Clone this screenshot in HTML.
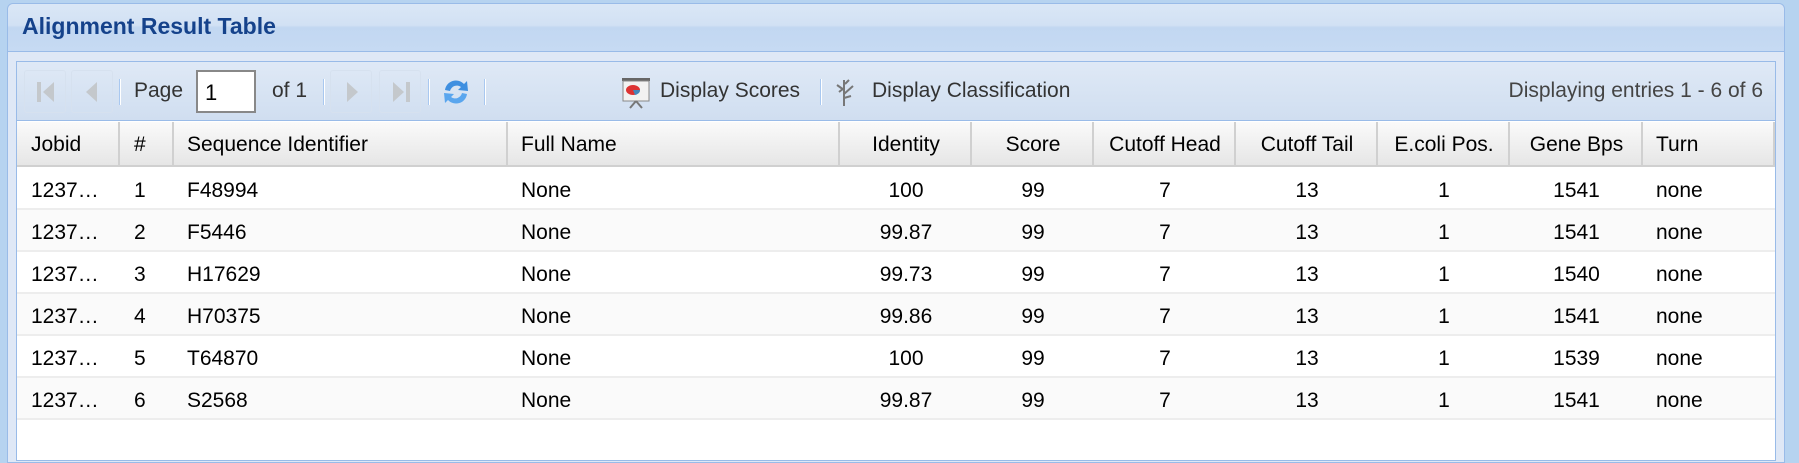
<!DOCTYPE html>
<html><head><meta charset="utf-8"><style>
*{margin:0;padding:0;box-sizing:border-box}
body{width:1799px;height:456px;overflow:hidden;background:#b6d3f0;font-family:"Liberation Sans",Tahoma,sans-serif;position:relative}
.outer{position:absolute;left:7px;top:3px;width:1778px;height:460px;border:1px solid #99bbe8;border-radius:6px 6px 0 0;background:#dfe8f6}
.title{position:absolute;left:0;top:0;right:0;height:48px;background:linear-gradient(#dae7f6 0,#d2e1f4 45%,#c2d7f1 50%,#c6daf3 100%);border-bottom:1px solid #99bbe8;border-radius:6px 6px 0 0}
.title span{position:absolute;left:14px;top:9px;font-weight:bold;font-size:23px;color:#15428b}
.inner{position:absolute;left:16px;top:61px;width:1760px;height:400px;border:1px solid #99bbe8;background:#fff}
.tb{position:absolute;left:0;top:0;right:0;height:59px;background:linear-gradient(#dfe9f6,#d0def0);border-bottom:1px solid #99bbe8}
.t{position:absolute;font-size:21px;color:#333;top:17px;white-space:nowrap}
.sep{position:absolute;top:17px;width:2px;height:26px;background:#a9c8f0;border-right:1px solid #fff}
.btn{position:absolute;top:8px;width:42px;height:43px;border:1px solid #d6e1ef;border-radius:3px}
.inp{position:absolute;left:179px;top:8px;width:60px;height:43px;border:2px solid #888;background:#fff;font-size:22px;padding:8px 0 0 7px}
.hd{position:absolute;top:60px;left:0;right:0;height:45px;background:linear-gradient(#fafafa,#e6e6e6);border-bottom:2px solid #d0d0d0}
.c{position:absolute;font-size:21px;color:#000;white-space:nowrap}
.hc{position:absolute;top:0;height:44px;border-right:2px solid #d0d0d0}
.row{position:absolute;left:0;right:0;height:42px;border-bottom:2px solid #ededed}
</style></head><body>
<div class="outer">
 <div class="title"><span>Alignment Result Table</span></div>
</div>
<div class="inner">
 <div class="tb">
  <div class="btn" style="left:7px"></div>
  <svg style="position:absolute;left:16px;top:17px" width="26" height="26"><rect x="4" y="3" width="4" height="20" fill="#c4c8cc"/><path d="M21 3 L10 13 L21 23Z" fill="#c4c8cc"/></svg>
  <div class="btn" style="left:54px"></div>
  <svg style="position:absolute;left:63px;top:17px" width="26" height="26"><path d="M17 3 L6 13 L17 23Z" fill="#c4c8cc"/></svg>
  <div class="sep" style="left:102px"></div>
  <div class="t" style="left:117px">Page</div>
  <div class="inp">1</div>
  <div class="t" style="left:255px">of 1</div>
  <div class="sep" style="left:306px"></div>
  <div class="btn" style="left:313px"></div>
  <svg style="position:absolute;left:322px;top:17px" width="26" height="26"><path d="M8 3 L19 13 L8 23Z" fill="#c4c8cc"/></svg>
  <div class="btn" style="left:362px"></div>
  <svg style="position:absolute;left:371px;top:17px" width="26" height="26"><path d="M5 3 L16 13 L5 23Z" fill="#c4c8cc"/><rect x="18" y="3" width="4" height="20" fill="#c4c8cc"/></svg>
  <div class="sep" style="left:411px"></div>
  <svg style="position:absolute;left:423px;top:14px" width="32" height="32"><path d="M5 14 A11 11 0 0 1 24 8 L27 5 L28 15 L18 14 L21 11 A7 7 0 0 0 10 15Z" fill="#3f8fe0"/><path d="M27 18 A11 11 0 0 1 8 24 L5 27 L4 17 L14 18 L11 21 A7 7 0 0 0 22 17Z" fill="#5aa6ee"/></svg>
  <div class="sep" style="left:467px"></div>
  <svg style="position:absolute;left:603px;top:14px" width="32" height="34"><rect x="2" y="2" width="28" height="3" fill="#666"/><rect x="3" y="5" width="26" height="20" fill="#f2f2f2" stroke="#888"/><ellipse cx="13" cy="14" rx="7" ry="5" fill="#d33"/><path d="M13 14 L20 14 A7 5 0 0 1 15 19Z" fill="#48b"/><path d="M16 25 L10 32 M16 25 L22 32" stroke="#777" stroke-width="2"/></svg>
  <div class="t" style="left:643px">Display Scores</div>
  <div class="sep" style="left:803px"></div>
  <svg style="position:absolute;left:814px;top:14px" width="28" height="32"><path d="M13 30 L13 4 M13 14 L6 9 M13 18 L22 10 M13 22 L20 20 M14 8 L18 4 M13 12 L8 16" stroke="#777" stroke-width="2" fill="none"/></svg>
  <div class="t" style="left:855px">Display Classification</div>
  <div class="t" style="right:12px;color:#444">Displaying entries 1 - 6 of 6</div>
 </div>
 <div class="hd">
  <div class="hc" style="left:0;width:103px"></div>
  <div class="hc" style="left:103px;width:54px"></div>
  <div class="hc" style="left:157px;width:334px"></div>
  <div class="hc" style="left:491px;width:332px"></div>
  <div class="hc" style="left:823px;width:132px"></div>
  <div class="hc" style="left:955px;width:122px"></div>
  <div class="hc" style="left:1077px;width:142px"></div>
  <div class="hc" style="left:1219px;width:142px"></div>
  <div class="hc" style="left:1361px;width:132px"></div>
  <div class="hc" style="left:1493px;width:133px"></div>
  <div class="hc" style="left:1626px;width:132px"></div>
  <div class="c" style="left:14px;top:11px">Jobid</div>
  <div class="c" style="left:117px;top:11px">#</div>
  <div class="c" style="left:170px;top:11px">Sequence Identifier</div>
  <div class="c" style="left:504px;top:11px">Full Name</div>
  <div class="c" style="left:823px;width:132px;text-align:center;top:11px">Identity</div>
  <div class="c" style="left:955px;width:122px;text-align:center;top:11px">Score</div>
  <div class="c" style="left:1077px;width:142px;text-align:center;top:11px">Cutoff Head</div>
  <div class="c" style="left:1219px;width:142px;text-align:center;top:11px">Cutoff Tail</div>
  <div class="c" style="left:1361px;width:132px;text-align:center;top:11px">E.coli Pos.</div>
  <div class="c" style="left:1493px;width:133px;text-align:center;top:11px">Gene Bps</div>
  <div class="c" style="left:1639px;top:11px">Turn</div>
 </div>
 <div class="row" style="top:106px;background:#fff"><div class="c" style="left:14px;top:11px">1237…</div><div class="c" style="left:117px;top:11px">1</div><div class="c" style="left:170px;top:11px">F48994</div><div class="c" style="left:504px;top:11px">None</div><div class="c" style="left:823px;width:132px;text-align:center;top:11px">100</div><div class="c" style="left:955px;width:122px;text-align:center;top:11px">99</div><div class="c" style="left:1077px;width:142px;text-align:center;top:11px">7</div><div class="c" style="left:1219px;width:142px;text-align:center;top:11px">13</div><div class="c" style="left:1361px;width:132px;text-align:center;top:11px">1</div><div class="c" style="left:1493px;width:133px;text-align:center;top:11px">1541</div><div class="c" style="left:1639px;top:11px">none</div></div>
 <div class="row" style="top:148px;background:#fafafa"><div class="c" style="left:14px;top:11px">1237…</div><div class="c" style="left:117px;top:11px">2</div><div class="c" style="left:170px;top:11px">F5446</div><div class="c" style="left:504px;top:11px">None</div><div class="c" style="left:823px;width:132px;text-align:center;top:11px">99.87</div><div class="c" style="left:955px;width:122px;text-align:center;top:11px">99</div><div class="c" style="left:1077px;width:142px;text-align:center;top:11px">7</div><div class="c" style="left:1219px;width:142px;text-align:center;top:11px">13</div><div class="c" style="left:1361px;width:132px;text-align:center;top:11px">1</div><div class="c" style="left:1493px;width:133px;text-align:center;top:11px">1541</div><div class="c" style="left:1639px;top:11px">none</div></div>
 <div class="row" style="top:190px;background:#fff"><div class="c" style="left:14px;top:11px">1237…</div><div class="c" style="left:117px;top:11px">3</div><div class="c" style="left:170px;top:11px">H17629</div><div class="c" style="left:504px;top:11px">None</div><div class="c" style="left:823px;width:132px;text-align:center;top:11px">99.73</div><div class="c" style="left:955px;width:122px;text-align:center;top:11px">99</div><div class="c" style="left:1077px;width:142px;text-align:center;top:11px">7</div><div class="c" style="left:1219px;width:142px;text-align:center;top:11px">13</div><div class="c" style="left:1361px;width:132px;text-align:center;top:11px">1</div><div class="c" style="left:1493px;width:133px;text-align:center;top:11px">1540</div><div class="c" style="left:1639px;top:11px">none</div></div>
 <div class="row" style="top:232px;background:#fafafa"><div class="c" style="left:14px;top:11px">1237…</div><div class="c" style="left:117px;top:11px">4</div><div class="c" style="left:170px;top:11px">H70375</div><div class="c" style="left:504px;top:11px">None</div><div class="c" style="left:823px;width:132px;text-align:center;top:11px">99.86</div><div class="c" style="left:955px;width:122px;text-align:center;top:11px">99</div><div class="c" style="left:1077px;width:142px;text-align:center;top:11px">7</div><div class="c" style="left:1219px;width:142px;text-align:center;top:11px">13</div><div class="c" style="left:1361px;width:132px;text-align:center;top:11px">1</div><div class="c" style="left:1493px;width:133px;text-align:center;top:11px">1541</div><div class="c" style="left:1639px;top:11px">none</div></div>
 <div class="row" style="top:274px;background:#fff"><div class="c" style="left:14px;top:11px">1237…</div><div class="c" style="left:117px;top:11px">5</div><div class="c" style="left:170px;top:11px">T64870</div><div class="c" style="left:504px;top:11px">None</div><div class="c" style="left:823px;width:132px;text-align:center;top:11px">100</div><div class="c" style="left:955px;width:122px;text-align:center;top:11px">99</div><div class="c" style="left:1077px;width:142px;text-align:center;top:11px">7</div><div class="c" style="left:1219px;width:142px;text-align:center;top:11px">13</div><div class="c" style="left:1361px;width:132px;text-align:center;top:11px">1</div><div class="c" style="left:1493px;width:133px;text-align:center;top:11px">1539</div><div class="c" style="left:1639px;top:11px">none</div></div>
 <div class="row" style="top:316px;background:#fafafa"><div class="c" style="left:14px;top:11px">1237…</div><div class="c" style="left:117px;top:11px">6</div><div class="c" style="left:170px;top:11px">S2568</div><div class="c" style="left:504px;top:11px">None</div><div class="c" style="left:823px;width:132px;text-align:center;top:11px">99.87</div><div class="c" style="left:955px;width:122px;text-align:center;top:11px">99</div><div class="c" style="left:1077px;width:142px;text-align:center;top:11px">7</div><div class="c" style="left:1219px;width:142px;text-align:center;top:11px">13</div><div class="c" style="left:1361px;width:132px;text-align:center;top:11px">1</div><div class="c" style="left:1493px;width:133px;text-align:center;top:11px">1541</div><div class="c" style="left:1639px;top:11px">none</div></div>
</div>
</body></html>
